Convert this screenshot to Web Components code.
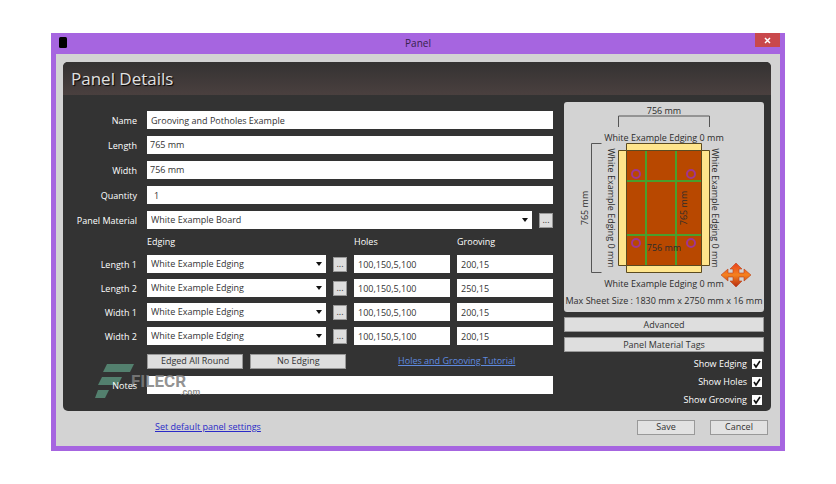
<!DOCTYPE html>
<html lang="en">
<head>
<meta charset="utf-8">
<title>Panel</title>
<style>
  body { margin: 0; background: #fff; font: 9px/14px "Open Sans", "Noto Sans", sans-serif; }
</style>
</head>
<body>
<panel-window></panel-window>

<script>
const controls = `
  * { box-sizing: border-box; }
  input, select, button { font: inherit; color: #333; margin: 0; border-radius: 0; min-width: 0; }
  input, select { width: 100%; height: 18px; border: 1px solid #fff; background: #fff; padding: 0 3px; }
  select { appearance: none; }
  button { border: 1px solid #999; background: #dedede; padding: 0; }
  label { color: #fff; text-align: right; font-weight: 500; padding-top: 2px; }
`;

class PickList extends HTMLElement {
  static formAssociated = true;
  connectedCallback() {
    this.attachShadow({ mode: 'open', delegatesFocus: true }).innerHTML = `
      <style>${controls}
        :host { display: grid; align-items: center; }
        select, svg { grid-area: 1 / 1; }
        svg { justify-self: end; margin-right: 4px; pointer-events: none; }
      </style>
      <select aria-label="${this.getAttribute('label')}"><option>${this.getAttribute('value')}</option></select>
      <svg width="6" height="4" viewBox="0 0 6 4"><path d="M0 0h6L3 4z" fill="#111"/></svg>`;
  }
}
customElements.define('pick-list', PickList);

class FieldRow extends HTMLElement {
  connectedCallback() {
    this.attachShadow({ mode: 'open' }).innerHTML = `
      <style>${controls}
        :host { display: grid; grid-template-columns: 67px 1fr; column-gap: 10px; align-items: center; height: 18px; }
        label { position: relative; z-index: 1; }
        :host([measure]) input { padding: 0 2px 2px; }
        :host([numeric]) input { padding: 0 6px; }
      </style>
      <label for="field">${this.getAttribute('label')}</label>
      <input id="field" value="${this.getAttribute('value') || ''}">`;
  }
}
customElements.define('field-row', FieldRow);

class MaterialRow extends HTMLElement {
  connectedCallback() {
    this.attachShadow({ mode: 'open' }).innerHTML = `
      <style>${controls}
        :host { display: grid; grid-template-columns: 67px 1fr 14px; align-items: center; height: 18px; }
        pick-list { margin: 0 7px 0 10px; }
        button { height: 15px; line-height: 10px; }
        label { white-space: nowrap; }
      </style>
      <label for="material">Panel Material</label>
      <pick-list id="material" label="Panel Material" value="White Example Board"></pick-list>
      <button aria-label="Choose material">...</button>`;
  }
}
customElements.define('material-row', MaterialRow);

class EdgeRow extends HTMLElement {
  connectedCallback() {
    const name = this.getAttribute('label');
    this.attachShadow({ mode: 'open' }).innerHTML = `
      <style>${controls}
        :host { display: grid; grid-template-columns: 67px 1fr; column-gap: 10px; align-items: center; }
        div { display: grid; grid-template-columns: 179fr 14px 96fr 96fr; column-gap: 7px; align-items: center; }
        button { height: 15px; line-height: 10px; }
        input, pick-list { height: 18px; }
      </style>
      <label for="edging">${name}</label>
      <div>
        <pick-list id="edging" label="${name} edging" value="White Example Edging"></pick-list>
        <button aria-label="Choose ${name} edging">...</button>
        <input aria-label="${name} holes" value="100,150,5,100">
        <input aria-label="${name} grooving" value="${this.getAttribute('grooving')}">
      </div>`;
  }
}
customElements.define('edge-row', EdgeRow);

class PanelForm extends HTMLElement {
  connectedCallback() {
    this.attachShadow({ mode: 'open' }).innerHTML = `
      <style>${controls}
        :host { display: block; }
        .top { display: grid; row-gap: 7px; }
        .columns { display: grid; grid-template-columns: 179fr 14px 96fr 96fr; column-gap: 7px; margin: 6px 0 6px 77px; color: #fff; height: 14px; font-weight: 500; }
        .columns span:nth-child(2) { grid-column: 3; }
        .edges { display: grid; row-gap: 6px; }
        .actions { display: grid; grid-template-columns: 96fr 96fr 199fr; column-gap: 7px; margin: 7px 0 6px 77px; align-items: center; height: 18px; }
        .actions button { height: 15px; line-height: 12px; }
        a { color: #5f8be0; justify-self: center; text-decoration: underline; margin-left: 7px; }
      </style>
      <div class="top">
        <field-row label="Name" value="Grooving and Potholes Example"></field-row>
        <field-row measure label="Length" value="765 mm"></field-row>
        <field-row measure label="Width" value="756 mm"></field-row>
        <field-row numeric label="Quantity" value="1"></field-row>
        <material-row></material-row>
      </div>
      <div class="columns"><span>Edging</span><span>Holes</span><span>Grooving</span></div>
      <div class="edges">
        <edge-row label="Length 1" grooving="200,15"></edge-row>
        <edge-row label="Length 2" grooving="250,15"></edge-row>
        <edge-row label="Width 1" grooving="200,15"></edge-row>
        <edge-row label="Width 2" grooving="200,15"></edge-row>
      </div>
      <div class="actions">
        <button>Edged All Round</button><button>No Edging</button>
        <a href="#tutorial">Holes and Grooving Tutorial</a>
      </div>
      <field-row label="Notes"></field-row>`;
  }
}
customElements.define('panel-form', PanelForm);

class SheetPreview extends HTMLElement {
  connectedCallback() {
    this.attachShadow({ mode: 'open' }).innerHTML = `
      <style>
        :host { display: block; background: #d3d3d3; border-radius: 3px; }
        svg { display: block; width: 100%; height: auto; }
        text { fill: #2c2c2c; font-size: 9px; text-anchor: middle; }
      </style>
      <svg viewBox="0 0 200 210">
        <defs>
          <linearGradient id="arrow" x1="0" y1="0" x2="0" y2="1"><stop offset="0" stop-color="#e8401c"/><stop offset=".5" stop-color="#f58220"/><stop offset="1" stop-color="#b52a10"/></linearGradient>
        </defs>
        <g fill="none" stroke="#555">
          <path d="M54.500 25v-11h91v11"/>
          <path d="M37.500 41.500h-10v129h10"/>
        </g>
        <g fill="#ffe58c" stroke="#5b4a20">
          <path d="M62.500 41.500h75v7h-75zM62.500 163.500h75v7h-75zM54.500 48.500h8v115h-8zM137.500 48.500h8v115h-8z"/>
        </g>
        <path d="M63 49h74v114H63z" fill="#b84800"/>
        <path d="M82 49v114M112 49v114M63 79h74M63 133h74" stroke="#4a9f2c" stroke-width="2" fill="none"/>
        <g fill="none" stroke="#a03590" stroke-width="2">
          <circle cx="72" cy="72" r="4"/><circle cx="127" cy="72" r="4"/>
          <circle cx="72" cy="141" r="4"/><circle cx="127" cy="141" r="4"/>
        </g>
        <text x="100" y="12">756 mm</text>
        <text x="100" y="39">White Example Edging 0 mm</text>
        <text x="100" y="185">White Example Edging 0 mm</text>
        <text x="100" y="202">Max Sheet Size : 1830 mm x 2750 mm x 16 mm</text>
        <text x="100" y="149">756 mm</text>
        <text transform="translate(24 106) rotate(-90)">765 mm</text>
        <text transform="translate(123 106) rotate(-90)">765 mm</text>
        <text transform="translate(44 106) rotate(90)">White Example Edging 0 mm</text>
        <text transform="translate(148 106) rotate(90)">White Example Edging 0 mm</text>
        <path fill="url(#arrow)" stroke="#b8421c" stroke-width=".6" d="M172 161l6 6h-3v4h5v-4l7 6-7 6v-4h-5v4h3l-6 6-6-6h3v-4h-5v4l-7-6 7-6v4h5v-4h-3z"/>
      </svg>`;
  }
}
customElements.define('sheet-preview', SheetPreview);

class CheckOption extends HTMLElement {
  connectedCallback() {
    this.attachShadow({ mode: 'open' }).innerHTML = `
      <style>${controls}
        :host { display: flex; justify-content: flex-end; }
        label { display: flex; align-items: center; gap: 5px; padding: 0; }
        span { display: grid; }
        input { grid-area: 1 / 1; appearance: none; width: 10px; height: 10px; padding: 0; }
        svg { grid-area: 1 / 1; pointer-events: none; visibility: hidden; }
        input:checked + svg { visibility: visible; }
      </style>
      <label><slot></slot><span><input type="checkbox" checked>
        <svg width="10" height="10" viewBox="0 0 10 10"><path d="M2 5l2 3 4-6" fill="none" stroke="#111" stroke-width="1.600"/></svg></span></label>`;
  }
}
customElements.define('check-option', CheckOption);

class PreviewColumn extends HTMLElement {
  connectedCallback() {
    this.attachShadow({ mode: 'open' }).innerHTML = `
      <style>${controls}
        :host { display: flex; flex-direction: column; }
        button { height: 15px; line-height: 13px; margin-top: 5px; }
        .checks { display: grid; gap: 4px; margin: 5px 2px 0 0; }
      </style>
      <sheet-preview></sheet-preview>
      <button>Advanced</button>
      <button>Panel Material Tags</button>
      <div class="checks">
        <check-option>Show Edging</check-option>
        <check-option>Show Holes</check-option>
        <check-option>Show Grooving</check-option>
      </div>`;
  }
}
customElements.define('preview-column', PreviewColumn);

class FileMark extends HTMLElement {
  connectedCallback() {
    this.attachShadow({ mode: 'open' }).innerHTML = `
      <style>
        :host { display: block; pointer-events: none; font-family: Roboto, sans-serif; font-weight: 700; }
        svg { display: block; }
        text { fill: #808080; fill-opacity: .85; }
      </style>
      <svg width="110" height="36" viewBox="0 0 110 36">
        <path d="M12 1h27l-4 8H8zM7 14h20l-4 8H3zM3 27h11l-4 8H0z" fill="#53806e"/>
        <text x="36" y="24" font-size="17">FILECR</text>
        <text x="85" y="32" font-size="9">.com</text>
      </svg>`;
  }
}
customElements.define('file-mark', FileMark);

class PanelWindow extends HTMLElement {
  connectedCallback() {
    this.attachShadow({ mode: 'open' }).innerHTML = `
      <style>${controls}
        :host { display: block; padding: 33px 51px; }
        .window { background: #a665e0; padding: 0 5px 5px; }
        header { display: grid; grid-template-columns: 25px 1fr 25px; height: 21px; color: #35224a; font-size: 10px; }
        header svg { margin: 4px 0 0 3px; }
        header span { text-align: center; line-height: 20px; }
        header button { height: 14px; border: 0; background: #c9484c; color: #fff; display: grid; place-items: center; }
        header button svg { margin: 0; }
        main { background: #d3d3d3; padding: 8px 9px 0 7px; }
        section { position: relative; background: #333; border-radius: 5px; overflow: hidden; padding-bottom: 4px; }
        h1 { margin: 0; height: 33px; padding-left: 8px; font-size: 17px; line-height: 34px; font-weight: 400; color: #e0e0e0;
             text-shadow: 1px 1px 1px #000; background: linear-gradient(#343232, #4a403f); }
        .body { display: grid; grid-template-columns: 483fr 200fr; column-gap: 11px; padding: 7px 7px 0; }
        panel-form { margin-top: 9px; }
        file-mark { position: absolute; left: 32px; bottom: 12px; }
        footer { display: flex; align-items: center; gap: 15px; height: 35px; padding: 0 3px 3px 92px; }
        footer a { color: #2a2ac8; margin-right: auto; text-decoration: underline; }
        footer button { width: 58px; height: 15px; line-height: 12px; background: #e2e2e2; }
      </style>
      <div class="window">
        <header>
          <svg width="9" height="12" viewBox="0 0 9 12"><rect width="8" height="11" rx="1.500" fill="#000"/></svg>
          <span>Panel</span>
          <button aria-label="Close"><svg width="7" height="7" viewBox="0 0 7 7"><path d="M1 1l5 5M6 1L1 6" stroke="#fff" stroke-width="1.500"/></svg></button>
        </header>
        <main>
          <section>
            <h1>Panel Details</h1>
            <div class="body">
              <panel-form></panel-form>
              <preview-column></preview-column>
            </div>
            <file-mark></file-mark>
          </section>
          <footer>
            <a href="#defaults">Set default panel settings</a>
            <button>Save</button>
            <button>Cancel</button>
          </footer>
        </main>
      </div>`;
  }
}
customElements.define('panel-window', PanelWindow);
</script>
</body>
</html>
